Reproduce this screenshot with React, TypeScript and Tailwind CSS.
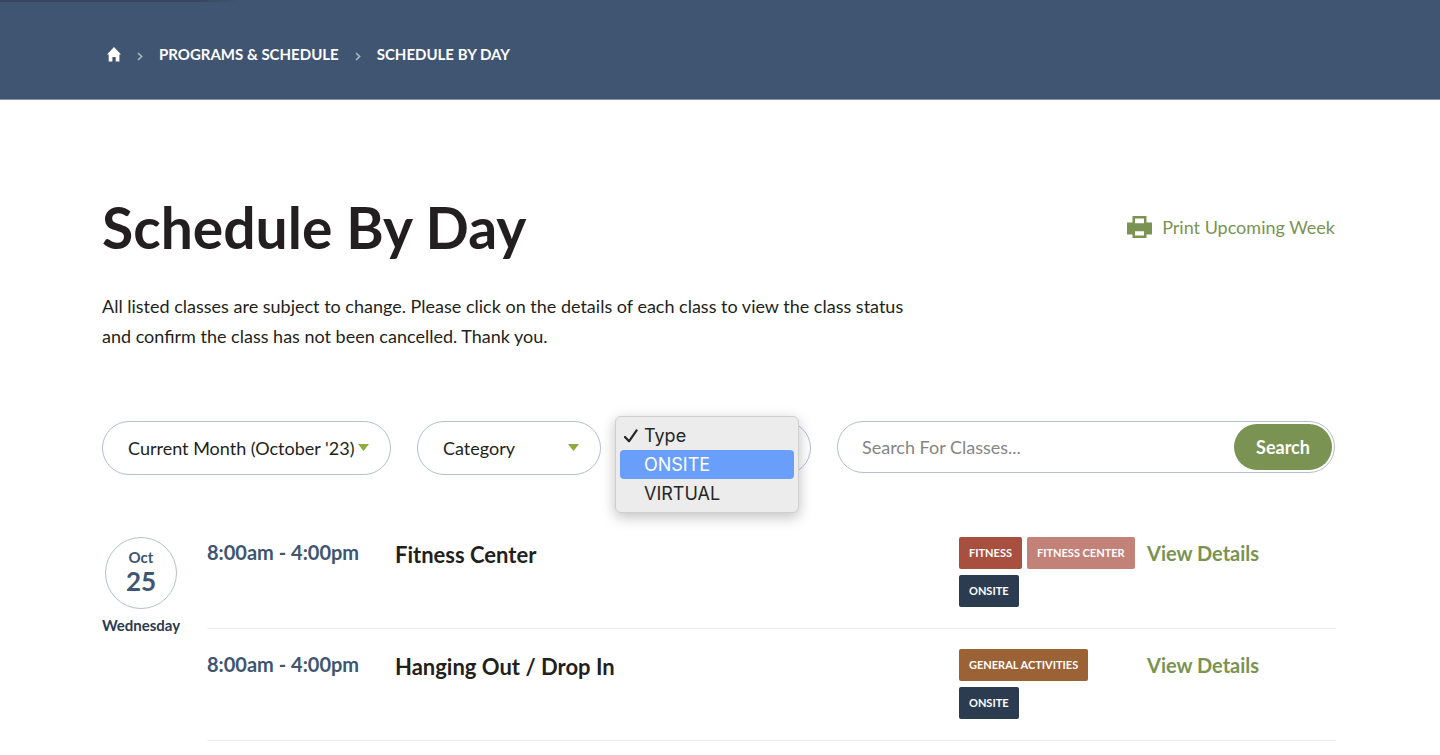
import { useState } from "react";

type Tag = { label: string; color: string };

type ClassItem = {
  time: string;
  title: string;
  tags: Tag[];
};

const CLASSES: ClassItem[] = [
  {
    time: "8:00am - 4:00pm",
    title: "Fitness Center",
    tags: [
      { label: "Fitness", color: "bg-[#a84f3f]" },
      { label: "Fitness Center", color: "bg-[#c38278]" },
      { label: "Onsite", color: "bg-[#2b3b50]" },
    ],
  },
  {
    time: "8:00am - 4:00pm",
    title: "Hanging Out / Drop In",
    tags: [
      { label: "General Activities", color: "bg-[#9b6236]" },
      { label: "Onsite", color: "bg-[#2b3b50]" },
    ],
  },
];

const TYPES = ["Type", "ONSITE", "VIRTUAL"];

function HomeIcon() {
  return (
    <svg width="14" height="15" viewBox="0 0 14 15" fill="currentColor" aria-hidden="true">
      <path d="M7 0 L14 7.4 H12.4 V14.5 H8.7 V10 H5.4 V14.5 H1.7 V7.4 H0 Z" />
    </svg>
  );
}

function Chevron() {
  return (
    <svg className="mt-1" width="6" height="9" viewBox="0 0 6 9" fill="none" aria-hidden="true">
      <path d="M1 1 L4.6 4.5 L1 8" stroke="#a9b4c3" strokeWidth="1.7" />
    </svg>
  );
}

function PrintIcon() {
  return (
    <svg width="25" height="22" viewBox="0 0 25 22" fill="currentColor" aria-hidden="true">
      <path
        fillRule="evenodd"
        d="M5.5 0 H19.5 V6.5 H25 V18.5 H19.5 V22 H5.5 V18.5 H0 V6.5 H5.5 Z M8 2.5 V7.3 H17 V2.5 Z M8 15.2 V19.6 H17 V15.2 Z"
      />
    </svg>
  );
}

function Caret() {
  return (
    <svg
      className="pointer-events-none absolute top-[23px] right-[22px]"
      width="11"
      height="7"
      viewBox="0 0 11 7"
      aria-hidden="true"
    >
      <path d="M0 0 H11 L5.5 7 Z" fill="#91a93f" />
    </svg>
  );
}

function FilterSelect({ label, options }: { label: string; options: string[] }) {
  return (
    <div className="relative">
      <select
        aria-label={label}
        className="h-[54px] w-full appearance-none rounded-full border border-[#b4bfcd] bg-white pl-[25px] text-[18px] text-[#231f20]"
      >
        {options.map((option) => (
          <option key={option}>{option}</option>
        ))}
      </select>
      <Caret />
    </div>
  );
}

function TypeMenu() {
  const [selected, setSelected] = useState("Type");

  return (
    <div className="absolute -top-[5px] -left-3 z-10 flex w-[184px] flex-col rounded-md border border-[#cfcfcf] bg-[#ececec] px-1 pt-1 pb-1 font-[Inter,sans-serif] text-[18px] text-[#262626] shadow-[0_4px_14px_rgba(0,0,0,0.25)]">
      {TYPES.map((type) => (
        <button
          key={type}
          type="button"
          onClick={() => setSelected(type)}
          className={`flex h-[29px] items-center rounded text-left ${
            type === "ONSITE" ? "bg-[#699ffa] text-white" : ""
          }`}
        >
          <span className="flex w-6 pl-1">
            {type === selected && (
              <svg width="14" height="14" viewBox="0 0 14 14" fill="none" aria-hidden="true">
                <path
                  d="M1 8 L5 12.3 L12.6 1.4"
                  stroke="currentColor"
                  strokeWidth="2.2"
                  strokeLinecap="round"
                  strokeLinejoin="round"
                />
              </svg>
            )}
          </span>
          {type}
        </button>
      ))}
    </div>
  );
}

function ClassRow({ item }: { item: ClassItem }) {
  return (
    <li className="grid grid-cols-6 border-b border-[#ececec] pt-5 pb-[21px]">
      <p className="text-[20px] leading-[30px] font-bold text-[#405571]">{item.time}</p>
      <h2 className="col-span-3 text-[22px] leading-9 font-bold text-[#231f20]">{item.title}</h2>
      <div className="flex flex-wrap content-start gap-x-[5px] gap-y-1.5">
        {item.tags.map((tag) => (
          <span
            key={tag.label}
            className={`h-8 rounded-xs px-2.5 text-[11px] leading-8 font-bold whitespace-nowrap text-white uppercase ${tag.color}`}
          >
            {tag.label}
          </span>
        ))}
      </div>
      <a href="#" className="text-[20px] leading-8 font-bold text-[#7a9352]">
        View Details
      </a>
    </li>
  );
}

export default function App() {
  return (
    <div className="min-h-screen bg-white font-[Lato,sans-serif] text-[#231f20]">
      <header className="relative border-b border-[#8491a4] bg-[#405571] pt-[39px] pr-[105px] pb-[30px] pl-[107px]">
        <div className="absolute top-0 left-0 h-0.5 w-[240px] bg-linear-to-r from-[#36475f] from-80% to-[#405571]" />
        <nav
          aria-label="Breadcrumb"
          className="flex items-center gap-4 text-[15px] leading-[30px] font-bold text-white uppercase"
        >
          <a href="#" aria-label="Home">
            <HomeIcon />
          </a>
          <Chevron />
          <a href="#">Programs &amp; Schedule</a>
          <Chevron />
          <a href="#">Schedule By Day</a>
        </nav>
      </header>

      <main className="pt-[91px] pr-[105px] pl-[102px]">
        <div className="flex items-center justify-between">
          <h1 className="text-[57px] leading-[72px] font-bold">Schedule By Day</h1>
          <a href="#" className="flex items-center gap-2.5 text-[18px] text-[#7a9352]">
            <PrintIcon />
            Print Upcoming Week
          </a>
        </div>

        <p className="mt-7 text-[18px] leading-[30px]">
          All listed classes are subject to change. Please click on the details of each class to view the class status
          <br />
          and confirm the class has not been cancelled. Thank you.
        </p>

        <form
          className="mt-[70px] grid grid-cols-[289px_184px_184px_1fr] items-start gap-x-[26px]"
          onSubmit={(e) => e.preventDefault()}
        >
          <FilterSelect label="Month" options={["Current Month (October '23)"]} />
          <FilterSelect label="Category" options={["Category"]} />
          <div className="relative">
            <FilterSelect label="Type" options={TYPES} />
            <TypeMenu />
          </div>
          <div className="flex h-[52px] items-center rounded-full border border-[#b4bfcd] bg-white pr-0.5 pl-6">
            <input
              type="search"
              aria-label="Search for classes"
              placeholder="Search For Classes..."
              className="min-w-0 flex-1 bg-transparent text-[18px] outline-none placeholder:text-[#858585]"
            />
            <button
              type="submit"
              className="h-[46px] w-[98px] rounded-full bg-[#7a9352] text-[18px] font-bold text-white"
            >
              Search
            </button>
          </div>
        </form>

        <section className="mt-[42px] flex">
          <div className="flex w-[105px] shrink-0 flex-col items-start pt-5">
            <div className="flex w-[78px] flex-col items-center">
              <div className="flex size-[72px] flex-col items-center justify-center rounded-full border border-[#b4bfcd] pb-1 font-bold text-[#405571]">
                <span className="text-[15px] leading-5">Oct</span>
                <span className="text-[26px] leading-7">25</span>
              </div>
              <span className="mt-1 text-[15px] leading-6 font-bold text-[#2b3b50]">Wednesday</span>
            </div>
          </div>
          <ul className="min-w-0 flex-1">
            {CLASSES.map((item) => (
              <ClassRow key={item.title} item={item} />
            ))}
          </ul>
        </section>
      </main>
    </div>
  );
}
